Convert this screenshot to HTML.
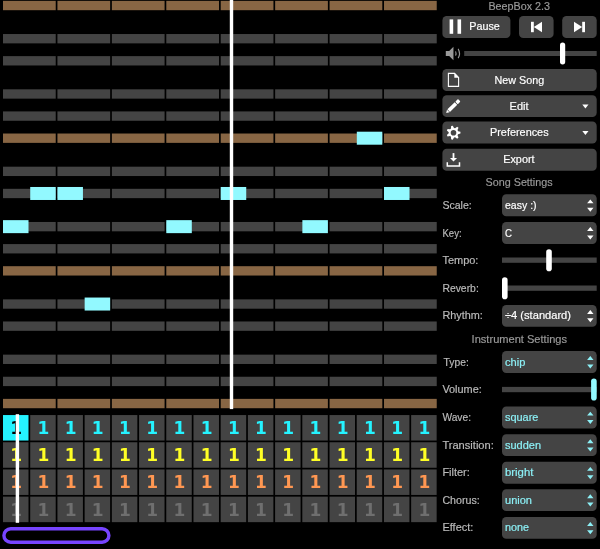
<!DOCTYPE html>
<html lang="en"><head><meta charset="utf-8"><title>BeepBox 2.3</title>
<style>
html,body{margin:0;padding:0;background:#000;overflow:hidden}
body{width:600px;height:549px;position:relative;font-family:"Liberation Sans",sans-serif}
svg{position:absolute;left:0;top:0;display:block;filter:blur(0.35px)}
text{font-family:"Liberation Sans",sans-serif;font-size:10.9px}
.trk text{font-family:"DejaVu Sans",sans-serif;font-weight:bold;font-size:17px;text-anchor:middle}
.btn{fill:#444}
</style></head><body>
<svg width="600" height="549" viewBox="0 0 600 549">
<rect width="600" height="549" fill="#000"/>
<g id="pattern">
<rect x="3.00" y="0.85" width="52.73" height="9.35" fill="#886644"/>
<rect x="57.43" y="0.85" width="52.73" height="9.35" fill="#886644"/>
<rect x="111.86" y="0.85" width="52.73" height="9.35" fill="#886644"/>
<rect x="166.29" y="0.85" width="52.73" height="9.35" fill="#886644"/>
<rect x="220.72" y="0.85" width="52.73" height="9.35" fill="#886644"/>
<rect x="275.15" y="0.85" width="52.73" height="9.35" fill="#886644"/>
<rect x="329.58" y="0.85" width="52.73" height="9.35" fill="#886644"/>
<rect x="384.01" y="0.85" width="52.73" height="9.35" fill="#886644"/>
<rect x="3.00" y="34.02" width="52.73" height="9.35" fill="#444"/>
<rect x="57.43" y="34.02" width="52.73" height="9.35" fill="#444"/>
<rect x="111.86" y="34.02" width="52.73" height="9.35" fill="#444"/>
<rect x="166.29" y="34.02" width="52.73" height="9.35" fill="#444"/>
<rect x="220.72" y="34.02" width="52.73" height="9.35" fill="#444"/>
<rect x="275.15" y="34.02" width="52.73" height="9.35" fill="#444"/>
<rect x="329.58" y="34.02" width="52.73" height="9.35" fill="#444"/>
<rect x="384.01" y="34.02" width="52.73" height="9.35" fill="#444"/>
<rect x="3.00" y="56.13" width="52.73" height="9.35" fill="#444"/>
<rect x="57.43" y="56.13" width="52.73" height="9.35" fill="#444"/>
<rect x="111.86" y="56.13" width="52.73" height="9.35" fill="#444"/>
<rect x="166.29" y="56.13" width="52.73" height="9.35" fill="#444"/>
<rect x="220.72" y="56.13" width="52.73" height="9.35" fill="#444"/>
<rect x="275.15" y="56.13" width="52.73" height="9.35" fill="#444"/>
<rect x="329.58" y="56.13" width="52.73" height="9.35" fill="#444"/>
<rect x="384.01" y="56.13" width="52.73" height="9.35" fill="#444"/>
<rect x="3.00" y="89.30" width="52.73" height="9.35" fill="#444"/>
<rect x="57.43" y="89.30" width="52.73" height="9.35" fill="#444"/>
<rect x="111.86" y="89.30" width="52.73" height="9.35" fill="#444"/>
<rect x="166.29" y="89.30" width="52.73" height="9.35" fill="#444"/>
<rect x="220.72" y="89.30" width="52.73" height="9.35" fill="#444"/>
<rect x="275.15" y="89.30" width="52.73" height="9.35" fill="#444"/>
<rect x="329.58" y="89.30" width="52.73" height="9.35" fill="#444"/>
<rect x="384.01" y="89.30" width="52.73" height="9.35" fill="#444"/>
<rect x="3.00" y="111.41" width="52.73" height="9.35" fill="#444"/>
<rect x="57.43" y="111.41" width="52.73" height="9.35" fill="#444"/>
<rect x="111.86" y="111.41" width="52.73" height="9.35" fill="#444"/>
<rect x="166.29" y="111.41" width="52.73" height="9.35" fill="#444"/>
<rect x="220.72" y="111.41" width="52.73" height="9.35" fill="#444"/>
<rect x="275.15" y="111.41" width="52.73" height="9.35" fill="#444"/>
<rect x="329.58" y="111.41" width="52.73" height="9.35" fill="#444"/>
<rect x="384.01" y="111.41" width="52.73" height="9.35" fill="#444"/>
<rect x="3.00" y="133.52" width="52.73" height="9.35" fill="#886644"/>
<rect x="57.43" y="133.52" width="52.73" height="9.35" fill="#886644"/>
<rect x="111.86" y="133.52" width="52.73" height="9.35" fill="#886644"/>
<rect x="166.29" y="133.52" width="52.73" height="9.35" fill="#886644"/>
<rect x="220.72" y="133.52" width="52.73" height="9.35" fill="#886644"/>
<rect x="275.15" y="133.52" width="52.73" height="9.35" fill="#886644"/>
<rect x="329.58" y="133.52" width="52.73" height="9.35" fill="#886644"/>
<rect x="384.01" y="133.52" width="52.73" height="9.35" fill="#886644"/>
<rect x="3.00" y="166.69" width="52.73" height="9.35" fill="#444"/>
<rect x="57.43" y="166.69" width="52.73" height="9.35" fill="#444"/>
<rect x="111.86" y="166.69" width="52.73" height="9.35" fill="#444"/>
<rect x="166.29" y="166.69" width="52.73" height="9.35" fill="#444"/>
<rect x="220.72" y="166.69" width="52.73" height="9.35" fill="#444"/>
<rect x="275.15" y="166.69" width="52.73" height="9.35" fill="#444"/>
<rect x="329.58" y="166.69" width="52.73" height="9.35" fill="#444"/>
<rect x="384.01" y="166.69" width="52.73" height="9.35" fill="#444"/>
<rect x="3.00" y="188.80" width="52.73" height="9.35" fill="#444"/>
<rect x="57.43" y="188.80" width="52.73" height="9.35" fill="#444"/>
<rect x="111.86" y="188.80" width="52.73" height="9.35" fill="#444"/>
<rect x="166.29" y="188.80" width="52.73" height="9.35" fill="#444"/>
<rect x="220.72" y="188.80" width="52.73" height="9.35" fill="#444"/>
<rect x="275.15" y="188.80" width="52.73" height="9.35" fill="#444"/>
<rect x="329.58" y="188.80" width="52.73" height="9.35" fill="#444"/>
<rect x="384.01" y="188.80" width="52.73" height="9.35" fill="#444"/>
<rect x="3.00" y="221.97" width="52.73" height="9.35" fill="#444"/>
<rect x="57.43" y="221.97" width="52.73" height="9.35" fill="#444"/>
<rect x="111.86" y="221.97" width="52.73" height="9.35" fill="#444"/>
<rect x="166.29" y="221.97" width="52.73" height="9.35" fill="#444"/>
<rect x="220.72" y="221.97" width="52.73" height="9.35" fill="#444"/>
<rect x="275.15" y="221.97" width="52.73" height="9.35" fill="#444"/>
<rect x="329.58" y="221.97" width="52.73" height="9.35" fill="#444"/>
<rect x="384.01" y="221.97" width="52.73" height="9.35" fill="#444"/>
<rect x="3.00" y="244.08" width="52.73" height="9.35" fill="#444"/>
<rect x="57.43" y="244.08" width="52.73" height="9.35" fill="#444"/>
<rect x="111.86" y="244.08" width="52.73" height="9.35" fill="#444"/>
<rect x="166.29" y="244.08" width="52.73" height="9.35" fill="#444"/>
<rect x="220.72" y="244.08" width="52.73" height="9.35" fill="#444"/>
<rect x="275.15" y="244.08" width="52.73" height="9.35" fill="#444"/>
<rect x="329.58" y="244.08" width="52.73" height="9.35" fill="#444"/>
<rect x="384.01" y="244.08" width="52.73" height="9.35" fill="#444"/>
<rect x="3.00" y="266.19" width="52.73" height="9.35" fill="#886644"/>
<rect x="57.43" y="266.19" width="52.73" height="9.35" fill="#886644"/>
<rect x="111.86" y="266.19" width="52.73" height="9.35" fill="#886644"/>
<rect x="166.29" y="266.19" width="52.73" height="9.35" fill="#886644"/>
<rect x="220.72" y="266.19" width="52.73" height="9.35" fill="#886644"/>
<rect x="275.15" y="266.19" width="52.73" height="9.35" fill="#886644"/>
<rect x="329.58" y="266.19" width="52.73" height="9.35" fill="#886644"/>
<rect x="384.01" y="266.19" width="52.73" height="9.35" fill="#886644"/>
<rect x="3.00" y="299.36" width="52.73" height="9.35" fill="#444"/>
<rect x="57.43" y="299.36" width="52.73" height="9.35" fill="#444"/>
<rect x="111.86" y="299.36" width="52.73" height="9.35" fill="#444"/>
<rect x="166.29" y="299.36" width="52.73" height="9.35" fill="#444"/>
<rect x="220.72" y="299.36" width="52.73" height="9.35" fill="#444"/>
<rect x="275.15" y="299.36" width="52.73" height="9.35" fill="#444"/>
<rect x="329.58" y="299.36" width="52.73" height="9.35" fill="#444"/>
<rect x="384.01" y="299.36" width="52.73" height="9.35" fill="#444"/>
<rect x="3.00" y="321.47" width="52.73" height="9.35" fill="#444"/>
<rect x="57.43" y="321.47" width="52.73" height="9.35" fill="#444"/>
<rect x="111.86" y="321.47" width="52.73" height="9.35" fill="#444"/>
<rect x="166.29" y="321.47" width="52.73" height="9.35" fill="#444"/>
<rect x="220.72" y="321.47" width="52.73" height="9.35" fill="#444"/>
<rect x="275.15" y="321.47" width="52.73" height="9.35" fill="#444"/>
<rect x="329.58" y="321.47" width="52.73" height="9.35" fill="#444"/>
<rect x="384.01" y="321.47" width="52.73" height="9.35" fill="#444"/>
<rect x="3.00" y="354.64" width="52.73" height="9.35" fill="#444"/>
<rect x="57.43" y="354.64" width="52.73" height="9.35" fill="#444"/>
<rect x="111.86" y="354.64" width="52.73" height="9.35" fill="#444"/>
<rect x="166.29" y="354.64" width="52.73" height="9.35" fill="#444"/>
<rect x="220.72" y="354.64" width="52.73" height="9.35" fill="#444"/>
<rect x="275.15" y="354.64" width="52.73" height="9.35" fill="#444"/>
<rect x="329.58" y="354.64" width="52.73" height="9.35" fill="#444"/>
<rect x="384.01" y="354.64" width="52.73" height="9.35" fill="#444"/>
<rect x="3.00" y="376.75" width="52.73" height="9.35" fill="#444"/>
<rect x="57.43" y="376.75" width="52.73" height="9.35" fill="#444"/>
<rect x="111.86" y="376.75" width="52.73" height="9.35" fill="#444"/>
<rect x="166.29" y="376.75" width="52.73" height="9.35" fill="#444"/>
<rect x="220.72" y="376.75" width="52.73" height="9.35" fill="#444"/>
<rect x="275.15" y="376.75" width="52.73" height="9.35" fill="#444"/>
<rect x="329.58" y="376.75" width="52.73" height="9.35" fill="#444"/>
<rect x="384.01" y="376.75" width="52.73" height="9.35" fill="#444"/>
<rect x="3.00" y="398.87" width="52.73" height="9.35" fill="#886644"/>
<rect x="57.43" y="398.87" width="52.73" height="9.35" fill="#886644"/>
<rect x="111.86" y="398.87" width="52.73" height="9.35" fill="#886644"/>
<rect x="166.29" y="398.87" width="52.73" height="9.35" fill="#886644"/>
<rect x="220.72" y="398.87" width="52.73" height="9.35" fill="#886644"/>
<rect x="275.15" y="398.87" width="52.73" height="9.35" fill="#886644"/>
<rect x="329.58" y="398.87" width="52.73" height="9.35" fill="#886644"/>
<rect x="384.01" y="398.87" width="52.73" height="9.35" fill="#886644"/>
</g>
<g id="notes" fill="#92f9ff">
<rect x="356.80" y="131.70" width="25.51" height="13.00"/>
<rect x="30.22" y="186.98" width="25.51" height="13.00"/>
<rect x="57.43" y="186.98" width="25.51" height="13.00"/>
<rect x="220.72" y="186.98" width="25.51" height="13.00"/>
<rect x="384.01" y="186.98" width="25.51" height="13.00"/>
<rect x="3.00" y="220.15" width="25.51" height="13.00"/>
<rect x="166.29" y="220.15" width="25.51" height="13.00"/>
<rect x="302.37" y="220.15" width="25.51" height="13.00"/>
<rect x="84.65" y="297.54" width="25.51" height="13.00"/>
</g>
<rect x="229.8" y="0" width="3.4" height="409.1" fill="#fff"/>
<g class="trk">
<rect x="3.00" y="415.05" width="25.5" height="25.5" fill="#25f3ff"/>
<text x="16.15" y="434.00" fill="#000">1</text>
<rect x="30.21" y="415.05" width="25.5" height="25.5" fill="#444"/>
<text x="43.36" y="434.00" fill="#25f3ff">1</text>
<rect x="57.42" y="415.05" width="25.5" height="25.5" fill="#444"/>
<text x="70.57" y="434.00" fill="#25f3ff">1</text>
<rect x="84.63" y="415.05" width="25.5" height="25.5" fill="#444"/>
<text x="97.78" y="434.00" fill="#25f3ff">1</text>
<rect x="111.84" y="415.05" width="25.5" height="25.5" fill="#444"/>
<text x="124.99" y="434.00" fill="#25f3ff">1</text>
<rect x="139.05" y="415.05" width="25.5" height="25.5" fill="#444"/>
<text x="152.20" y="434.00" fill="#25f3ff">1</text>
<rect x="166.26" y="415.05" width="25.5" height="25.5" fill="#444"/>
<text x="179.41" y="434.00" fill="#25f3ff">1</text>
<rect x="193.47" y="415.05" width="25.5" height="25.5" fill="#444"/>
<text x="206.62" y="434.00" fill="#25f3ff">1</text>
<rect x="220.68" y="415.05" width="25.5" height="25.5" fill="#444"/>
<text x="233.83" y="434.00" fill="#25f3ff">1</text>
<rect x="247.89" y="415.05" width="25.5" height="25.5" fill="#444"/>
<text x="261.04" y="434.00" fill="#25f3ff">1</text>
<rect x="275.10" y="415.05" width="25.5" height="25.5" fill="#444"/>
<text x="288.25" y="434.00" fill="#25f3ff">1</text>
<rect x="302.31" y="415.05" width="25.5" height="25.5" fill="#444"/>
<text x="315.46" y="434.00" fill="#25f3ff">1</text>
<rect x="329.52" y="415.05" width="25.5" height="25.5" fill="#444"/>
<text x="342.67" y="434.00" fill="#25f3ff">1</text>
<rect x="356.73" y="415.05" width="25.5" height="25.5" fill="#444"/>
<text x="369.88" y="434.00" fill="#25f3ff">1</text>
<rect x="383.94" y="415.05" width="25.5" height="25.5" fill="#444"/>
<text x="397.09" y="434.00" fill="#25f3ff">1</text>
<rect x="411.15" y="415.05" width="25.5" height="25.5" fill="#444"/>
<text x="424.30" y="434.00" fill="#25f3ff">1</text>
<rect x="3.00" y="442.25" width="25.5" height="25.5" fill="#444"/>
<text x="16.15" y="461.20" fill="#ffff25">1</text>
<rect x="30.21" y="442.25" width="25.5" height="25.5" fill="#444"/>
<text x="43.36" y="461.20" fill="#ffff25">1</text>
<rect x="57.42" y="442.25" width="25.5" height="25.5" fill="#444"/>
<text x="70.57" y="461.20" fill="#ffff25">1</text>
<rect x="84.63" y="442.25" width="25.5" height="25.5" fill="#444"/>
<text x="97.78" y="461.20" fill="#ffff25">1</text>
<rect x="111.84" y="442.25" width="25.5" height="25.5" fill="#444"/>
<text x="124.99" y="461.20" fill="#ffff25">1</text>
<rect x="139.05" y="442.25" width="25.5" height="25.5" fill="#444"/>
<text x="152.20" y="461.20" fill="#ffff25">1</text>
<rect x="166.26" y="442.25" width="25.5" height="25.5" fill="#444"/>
<text x="179.41" y="461.20" fill="#ffff25">1</text>
<rect x="193.47" y="442.25" width="25.5" height="25.5" fill="#444"/>
<text x="206.62" y="461.20" fill="#ffff25">1</text>
<rect x="220.68" y="442.25" width="25.5" height="25.5" fill="#444"/>
<text x="233.83" y="461.20" fill="#ffff25">1</text>
<rect x="247.89" y="442.25" width="25.5" height="25.5" fill="#444"/>
<text x="261.04" y="461.20" fill="#ffff25">1</text>
<rect x="275.10" y="442.25" width="25.5" height="25.5" fill="#444"/>
<text x="288.25" y="461.20" fill="#ffff25">1</text>
<rect x="302.31" y="442.25" width="25.5" height="25.5" fill="#444"/>
<text x="315.46" y="461.20" fill="#ffff25">1</text>
<rect x="329.52" y="442.25" width="25.5" height="25.5" fill="#444"/>
<text x="342.67" y="461.20" fill="#ffff25">1</text>
<rect x="356.73" y="442.25" width="25.5" height="25.5" fill="#444"/>
<text x="369.88" y="461.20" fill="#ffff25">1</text>
<rect x="383.94" y="442.25" width="25.5" height="25.5" fill="#444"/>
<text x="397.09" y="461.20" fill="#ffff25">1</text>
<rect x="411.15" y="442.25" width="25.5" height="25.5" fill="#444"/>
<text x="424.30" y="461.20" fill="#ffff25">1</text>
<rect x="3.00" y="469.45" width="25.5" height="25.5" fill="#444"/>
<text x="16.15" y="488.40" fill="#ff9752">1</text>
<rect x="30.21" y="469.45" width="25.5" height="25.5" fill="#444"/>
<text x="43.36" y="488.40" fill="#ff9752">1</text>
<rect x="57.42" y="469.45" width="25.5" height="25.5" fill="#444"/>
<text x="70.57" y="488.40" fill="#ff9752">1</text>
<rect x="84.63" y="469.45" width="25.5" height="25.5" fill="#444"/>
<text x="97.78" y="488.40" fill="#ff9752">1</text>
<rect x="111.84" y="469.45" width="25.5" height="25.5" fill="#444"/>
<text x="124.99" y="488.40" fill="#ff9752">1</text>
<rect x="139.05" y="469.45" width="25.5" height="25.5" fill="#444"/>
<text x="152.20" y="488.40" fill="#ff9752">1</text>
<rect x="166.26" y="469.45" width="25.5" height="25.5" fill="#444"/>
<text x="179.41" y="488.40" fill="#ff9752">1</text>
<rect x="193.47" y="469.45" width="25.5" height="25.5" fill="#444"/>
<text x="206.62" y="488.40" fill="#ff9752">1</text>
<rect x="220.68" y="469.45" width="25.5" height="25.5" fill="#444"/>
<text x="233.83" y="488.40" fill="#ff9752">1</text>
<rect x="247.89" y="469.45" width="25.5" height="25.5" fill="#444"/>
<text x="261.04" y="488.40" fill="#ff9752">1</text>
<rect x="275.10" y="469.45" width="25.5" height="25.5" fill="#444"/>
<text x="288.25" y="488.40" fill="#ff9752">1</text>
<rect x="302.31" y="469.45" width="25.5" height="25.5" fill="#444"/>
<text x="315.46" y="488.40" fill="#ff9752">1</text>
<rect x="329.52" y="469.45" width="25.5" height="25.5" fill="#444"/>
<text x="342.67" y="488.40" fill="#ff9752">1</text>
<rect x="356.73" y="469.45" width="25.5" height="25.5" fill="#444"/>
<text x="369.88" y="488.40" fill="#ff9752">1</text>
<rect x="383.94" y="469.45" width="25.5" height="25.5" fill="#444"/>
<text x="397.09" y="488.40" fill="#ff9752">1</text>
<rect x="411.15" y="469.45" width="25.5" height="25.5" fill="#444"/>
<text x="424.30" y="488.40" fill="#ff9752">1</text>
<rect x="3.00" y="496.65" width="25.5" height="25.5" fill="#444"/>
<text x="16.15" y="515.60" fill="#6f6f6f">1</text>
<rect x="30.21" y="496.65" width="25.5" height="25.5" fill="#444"/>
<text x="43.36" y="515.60" fill="#6f6f6f">1</text>
<rect x="57.42" y="496.65" width="25.5" height="25.5" fill="#444"/>
<text x="70.57" y="515.60" fill="#6f6f6f">1</text>
<rect x="84.63" y="496.65" width="25.5" height="25.5" fill="#444"/>
<text x="97.78" y="515.60" fill="#6f6f6f">1</text>
<rect x="111.84" y="496.65" width="25.5" height="25.5" fill="#444"/>
<text x="124.99" y="515.60" fill="#6f6f6f">1</text>
<rect x="139.05" y="496.65" width="25.5" height="25.5" fill="#444"/>
<text x="152.20" y="515.60" fill="#6f6f6f">1</text>
<rect x="166.26" y="496.65" width="25.5" height="25.5" fill="#444"/>
<text x="179.41" y="515.60" fill="#6f6f6f">1</text>
<rect x="193.47" y="496.65" width="25.5" height="25.5" fill="#444"/>
<text x="206.62" y="515.60" fill="#6f6f6f">1</text>
<rect x="220.68" y="496.65" width="25.5" height="25.5" fill="#444"/>
<text x="233.83" y="515.60" fill="#6f6f6f">1</text>
<rect x="247.89" y="496.65" width="25.5" height="25.5" fill="#444"/>
<text x="261.04" y="515.60" fill="#6f6f6f">1</text>
<rect x="275.10" y="496.65" width="25.5" height="25.5" fill="#444"/>
<text x="288.25" y="515.60" fill="#6f6f6f">1</text>
<rect x="302.31" y="496.65" width="25.5" height="25.5" fill="#444"/>
<text x="315.46" y="515.60" fill="#6f6f6f">1</text>
<rect x="329.52" y="496.65" width="25.5" height="25.5" fill="#444"/>
<text x="342.67" y="515.60" fill="#6f6f6f">1</text>
<rect x="356.73" y="496.65" width="25.5" height="25.5" fill="#444"/>
<text x="369.88" y="515.60" fill="#6f6f6f">1</text>
<rect x="383.94" y="496.65" width="25.5" height="25.5" fill="#444"/>
<text x="397.09" y="515.60" fill="#6f6f6f">1</text>
<rect x="411.15" y="496.65" width="25.5" height="25.5" fill="#444"/>
<text x="424.30" y="515.60" fill="#6f6f6f">1</text>
</g>
<rect x="15.7" y="414.2" width="3.4" height="108.6" fill="#fff"/>
<path d="M10.70 528.7 L102.10 528.7 A6.80 6.80 0 0 1 102.10 542.3 L10.70 542.3 A6.80 6.80 0 0 1 10.70 528.7 z" fill="none" stroke="#7744ff" stroke-width="3.4"/>
<text x="488.4" y="10.4" fill="#999" stroke="#999" stroke-width="0.18" textLength="61.6" lengthAdjust="spacingAndGlyphs">BeepBox 2.3</text>
<rect class="btn" x="442.4" y="16.1" width="68.00" height="22.0" rx="4.3"/>
<rect x="449.6" y="19.4" width="3.6" height="14.4" fill="#fff"/><rect x="457.5" y="19.4" width="3.6" height="14.4" fill="#fff"/>
<text x="469.2" y="30.4" fill="#fff" stroke="#fff" stroke-width="0.18" textLength="30.6" lengthAdjust="spacingAndGlyphs">Pause</text>
<rect class="btn" x="519" y="16.1" width="34.60" height="22.0" rx="4.3"/>
<rect x="531" y="21.8" width="2.8" height="10.4" fill="#fff"/><path d="M542 21.8 L542 32.2 L533.8 27 z" fill="#fff"/>
<rect class="btn" x="562.2" y="16.1" width="34.50" height="22.0" rx="4.3"/>
<rect x="582.2" y="21.8" width="2.8" height="10.4" fill="#fff"/><path d="M574 21.8 L574 32.2 L582.2 27 z" fill="#fff"/>
<g transform="translate(442.4 42.45) scale(0.85)"><path d="M 4 16 L 4 10 L 8 10 L 13 5 L 13 21 L 8 16 z M 15 11 L 16 10 A 7.2 7.2 0 0 1 16 16 L 15 15 A 5.8 5.8 0 0 0 15 11 z M 18 8 L 19 7 A 11.5 11.5 0 0 1 19 19 L 18 18 A 10.1 10.1 0 0 0 18 8 z" fill="#999"/></g>
<rect x="464.2" y="51" width="132.5" height="5" fill="#444"/>
<rect x="560" y="42.4" width="5.2" height="22" rx="2.6" fill="#fff"/>
<rect class="btn" x="442.4" y="69.0" width="154.30" height="21.9" rx="4.3"/>
<text x="494.6" y="83.5" fill="#fff" stroke="#fff" stroke-width="0.18" textLength="49.6" lengthAdjust="spacingAndGlyphs">New Song</text>
<rect class="btn" x="442.4" y="95.2" width="154.30" height="21.9" rx="4.3"/>
<text x="509.6" y="109.7" fill="#fff" stroke="#fff" stroke-width="0.18" textLength="19.0" lengthAdjust="spacingAndGlyphs">Edit</text>
<rect class="btn" x="442.4" y="121.6" width="154.30" height="21.9" rx="4.3"/>
<text x="490.0" y="136.1" fill="#fff" stroke="#fff" stroke-width="0.18" textLength="58.6" lengthAdjust="spacingAndGlyphs">Preferences</text>
<rect class="btn" x="442.4" y="148.8" width="154.30" height="21.9" rx="4.3"/>
<text x="503.20000000000005" y="163.3" fill="#fff" stroke="#fff" stroke-width="0.18" textLength="31.4" lengthAdjust="spacingAndGlyphs">Export</text>
<path d="M448.4 73.4 H454.6 L458.6 77.4 V86.4 H448.4 z" fill="none" stroke="#fff" stroke-width="1.1"/><path d="M454.3 73 L459 77.8 H454.3 z" fill="#fff"/>
<g transform="translate(446.2 113.1) rotate(-44.5)" fill="#fff"><path d="M0 0 L2.9 -1.8 L2.9 1.8 z"/><rect x="3.5" y="-1.8" width="10.2" height="3.6"/><rect x="14.4" y="-1.8" width="3.9" height="3.6" rx="0.8"/></g>
<path d="M458.04 131.14 L460.45 131.86 L460.45 133.54 L458.04 134.26 L457.55 135.28 L458.49 137.61 L457.18 138.66 L455.12 137.22 L454.01 137.47 L452.77 139.66 L451.14 139.29 L450.97 136.78 L450.08 136.07 L447.60 136.47 L446.87 134.96 L448.73 133.27 L448.73 132.13 L446.87 130.44 L447.60 128.93 L450.08 129.33 L450.97 128.62 L451.14 126.11 L452.77 125.74 L454.01 127.93 L455.12 128.18 L457.18 126.74 L458.49 127.79 L457.55 130.12 z M456.30 132.7 A2.8 2.8 0 1 0 450.70 132.7 A2.8 2.8 0 1 0 456.30 132.7 z" fill="#fff" fill-rule="evenodd"/>
<path d="M447.3 162.2 V166 H459.5 V162.2" fill="none" stroke="#fff" stroke-width="1.5"/><rect x="452.6" y="153.1" width="1.8" height="6" fill="#fff"/><path d="M450 158 H457.1 L453.5 161.6 z" fill="#fff"/>
<path d="M582.3 104.6 H588.5 L585.4 108.5 z" fill="#fff"/>
<path d="M582.3 131.0 H588.5 L585.4 134.9 z" fill="#fff"/>
<text x="485.6" y="185.6" fill="#999" stroke="#999" stroke-width="0.18" textLength="67.0" lengthAdjust="spacingAndGlyphs">Song Settings</text>
<rect class="btn" x="502" y="194.3" width="94.70" height="21.9" rx="4.3"/>
<text x="442.4" y="208.8" fill="#bbb" stroke="#bbb" stroke-width="0.18" textLength="29.4" lengthAdjust="spacingAndGlyphs">Scale:</text>
<text x="505" y="208.8" fill="#fff" stroke="#fff" stroke-width="0.18" textLength="31.6" lengthAdjust="spacingAndGlyphs">easy :)</text>
<path d="M587.1 203.3 H593.5 L590.3 199.4 z M587.1 207.7 H593.5 L590.3 211.7 z" fill="#fff"/>
<rect class="btn" x="502" y="222.0" width="94.70" height="21.9" rx="4.3"/>
<text x="442.4" y="236.5" fill="#bbb" stroke="#bbb" stroke-width="0.18" textLength="19.2" lengthAdjust="spacingAndGlyphs">Key:</text>
<text x="505" y="236.5" fill="#fff" stroke="#fff" stroke-width="0.18" textLength="7.0" lengthAdjust="spacingAndGlyphs">C</text>
<path d="M587.1 231.0 H593.5 L590.3 227.1 z M587.1 235.4 H593.5 L590.3 239.4 z" fill="#fff"/>
<text x="442.4" y="263.59999999999997" fill="#bbb" stroke="#bbb" stroke-width="0.18" textLength="36.0" lengthAdjust="spacingAndGlyphs">Tempo:</text>
<rect x="502" y="257.5" width="94.7" height="5.3" fill="#444"/>
<rect x="546.2" y="249.2" width="5.6" height="22" rx="2.8" fill="#fff"/>
<text x="442.4" y="291.59999999999997" fill="#bbb" stroke="#bbb" stroke-width="0.18" textLength="36.4" lengthAdjust="spacingAndGlyphs">Reverb:</text>
<rect x="502" y="285.5" width="94.7" height="5.3" fill="#444"/>
<rect x="502" y="277.2" width="5.6" height="22" rx="2.8" fill="#fff"/>
<rect class="btn" x="502" y="304.9" width="94.70" height="21.9" rx="4.3"/>
<text x="442.4" y="319.4" fill="#bbb" stroke="#bbb" stroke-width="0.18" textLength="40.4" lengthAdjust="spacingAndGlyphs">Rhythm:</text>
<text x="505" y="319.4" fill="#fff" stroke="#fff" stroke-width="0.18" textLength="66.0" lengthAdjust="spacingAndGlyphs">÷4 (standard)</text>
<path d="M587.1 313.9 H593.5 L590.3 310.0 z M587.1 318.3 H593.5 L590.3 322.3 z" fill="#fff"/>
<text x="471.6" y="343" fill="#999" stroke="#999" stroke-width="0.18" textLength="95.4" lengthAdjust="spacingAndGlyphs">Instrument Settings</text>
<rect class="btn" x="502" y="351.0" width="94.70" height="21.9" rx="4.3"/>
<text x="443.6" y="365.5" fill="#bbb" stroke="#bbb" stroke-width="0.18" textLength="25.2" lengthAdjust="spacingAndGlyphs">Type:</text>
<text x="505" y="365.5" fill="#8cf0f6" stroke="#8cf0f6" stroke-width="0.18" textLength="20.4" lengthAdjust="spacingAndGlyphs">chip</text>
<path d="M587.1 360.0 H593.5 L590.3 356.1 z M587.1 364.4 H593.5 L590.3 368.4 z" fill="#8cf0f6"/>
<text x="442.4" y="393.0" fill="#bbb" stroke="#bbb" stroke-width="0.18" textLength="39.4" lengthAdjust="spacingAndGlyphs">Volume:</text>
<rect x="502" y="386.9" width="94.7" height="5.3" fill="#444"/>
<rect x="591.1" y="378.6" width="5.6" height="22" rx="2.8" fill="#92f9ff"/>
<rect class="btn" x="502" y="406.6" width="94.70" height="21.9" rx="4.3"/>
<text x="442.4" y="421.1" fill="#bbb" stroke="#bbb" stroke-width="0.18" textLength="28.6" lengthAdjust="spacingAndGlyphs">Wave:</text>
<text x="505" y="421.1" fill="#8cf0f6" stroke="#8cf0f6" stroke-width="0.18" textLength="33.4" lengthAdjust="spacingAndGlyphs">square</text>
<path d="M587.1 415.6 H593.5 L590.3 411.7 z M587.1 420.0 H593.5 L590.3 424.0 z" fill="#8cf0f6"/>
<rect class="btn" x="502" y="434.2" width="94.70" height="21.9" rx="4.3"/>
<text x="442.4" y="448.7" fill="#bbb" stroke="#bbb" stroke-width="0.18" textLength="51.4" lengthAdjust="spacingAndGlyphs">Transition:</text>
<text x="505" y="448.7" fill="#8cf0f6" stroke="#8cf0f6" stroke-width="0.18" textLength="36.0" lengthAdjust="spacingAndGlyphs">sudden</text>
<path d="M587.1 443.2 H593.5 L590.3 439.3 z M587.1 447.6 H593.5 L590.3 451.6 z" fill="#8cf0f6"/>
<rect class="btn" x="502" y="461.8" width="94.70" height="21.9" rx="4.3"/>
<text x="442.4" y="476.3" fill="#bbb" stroke="#bbb" stroke-width="0.18" textLength="27.4" lengthAdjust="spacingAndGlyphs">Filter:</text>
<text x="505" y="476.3" fill="#8cf0f6" stroke="#8cf0f6" stroke-width="0.18" textLength="28.4" lengthAdjust="spacingAndGlyphs">bright</text>
<path d="M587.1 470.8 H593.5 L590.3 466.9 z M587.1 475.2 H593.5 L590.3 479.2 z" fill="#8cf0f6"/>
<rect class="btn" x="502" y="489.2" width="94.70" height="21.9" rx="4.3"/>
<text x="442.4" y="503.7" fill="#bbb" stroke="#bbb" stroke-width="0.18" textLength="37.4" lengthAdjust="spacingAndGlyphs">Chorus:</text>
<text x="505" y="503.7" fill="#8cf0f6" stroke="#8cf0f6" stroke-width="0.18" textLength="27.0" lengthAdjust="spacingAndGlyphs">union</text>
<path d="M587.1 498.2 H593.5 L590.3 494.3 z M587.1 502.6 H593.5 L590.3 506.6 z" fill="#8cf0f6"/>
<rect class="btn" x="502" y="516.9" width="94.70" height="21.9" rx="4.3"/>
<text x="442.4" y="531.4" fill="#bbb" stroke="#bbb" stroke-width="0.18" textLength="31.0" lengthAdjust="spacingAndGlyphs">Effect:</text>
<text x="505" y="531.4" fill="#8cf0f6" stroke="#8cf0f6" stroke-width="0.18" textLength="24.0" lengthAdjust="spacingAndGlyphs">none</text>
<path d="M587.1 525.9 H593.5 L590.3 522.0 z M587.1 530.3 H593.5 L590.3 534.3 z" fill="#8cf0f6"/>
</svg></body></html>
